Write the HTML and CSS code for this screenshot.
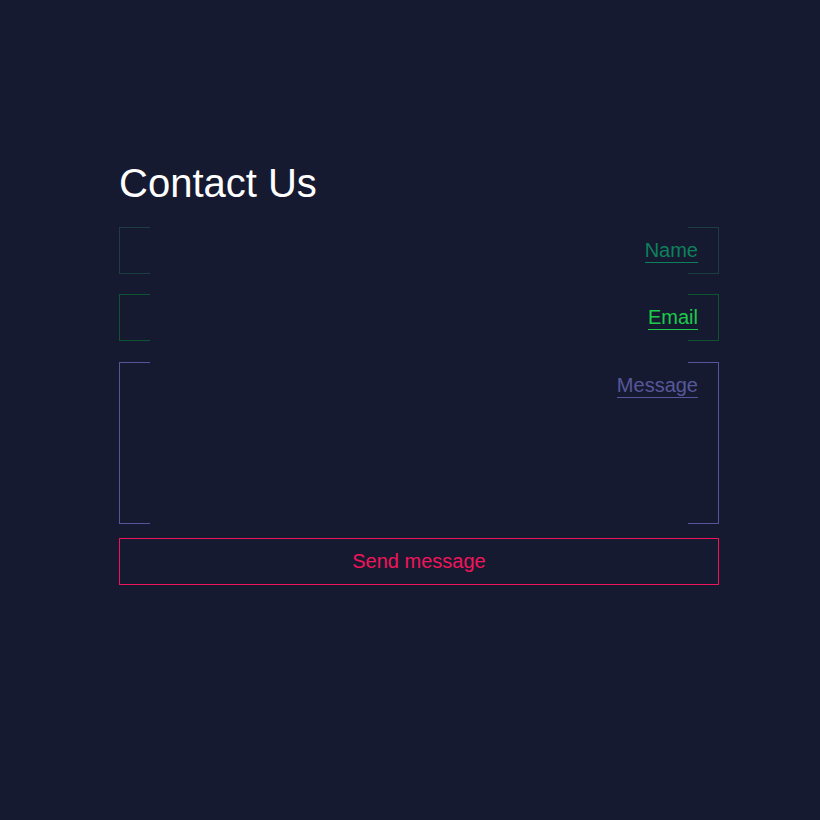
FILE: index.html
```html
<!DOCTYPE html>
<html lang="en">
<head>
<meta charset="utf-8">
<title>Contact Us</title>
<link rel="stylesheet" href="styles.css">
</head>
<body>
<main class="page">
  <h1 class="title">Contact Us</h1>
  <form class="form">
    <div class="field field-name">
      <label class="label">Name</label>
    </div>
    <div class="field field-email">
      <label class="label">Email</label>
    </div>
    <div class="field field-message">
      <label class="label">Message</label>
    </div>
    <button type="button" class="send">Send message</button>
  </form>
</main>
</body>
</html>
```

FILE: styles.css
```css
html, body {
  margin: 0;
  padding: 0;
  background: #161a30;
  height: 100%;
}
body {
  font-family: "Liberation Sans", Arial, sans-serif;
  color: #ffffff;
}
.page {
  width: 600px;
  margin-left: 119px;
  padding-top: 158px;
  box-sizing: border-box;
}
.title {
  margin: 0;
  font-size: 40px;
  font-weight: normal;
  line-height: 50px;
  color: #ffffff;
}
.form {
  margin-top: 19px;
  display: flex;
  flex-direction: column;
}
.field {
  position: relative;
  height: 47px;
  box-sizing: border-box;
  padding: 12px 21px 0 20px;
  display: flex;
  justify-content: flex-end;
  align-items: flex-start;
  margin-bottom: 20px;
  --c: #1c3d42;
  --t: #0e805c;
}
.field::before,
.field::after {
  content: "";
  position: absolute;
  top: 0;
  bottom: 0;
  width: 30px;
  border-top: 1px solid var(--c);
  border-bottom: 1px solid var(--c);
}
.field::before {
  left: 0;
  border-left: 1px solid var(--c);
}
.field::after {
  right: 0;
  border-right: 1px solid var(--c);
}
.field-email {
  --c: #0c5530;
  --t: #1ccb4a;
  margin-bottom: 21px;
}
.field-message {
  --c: #56579a;
  --t: #56579a;
  height: 162px;
  margin-bottom: 14px;
}
.label {
  font-size: 20px;
  line-height: 23px;
  color: var(--t);
  border-bottom: 1px solid var(--t);
}
.send {
  height: 47px;
  width: 100%;
  background: transparent;
  border: 1px solid #f0155a;
  color: #f0155a;
  font-family: "Liberation Sans", Arial, sans-serif;
  font-size: 20px;
  padding: 0;
  margin: 0;
}
```
